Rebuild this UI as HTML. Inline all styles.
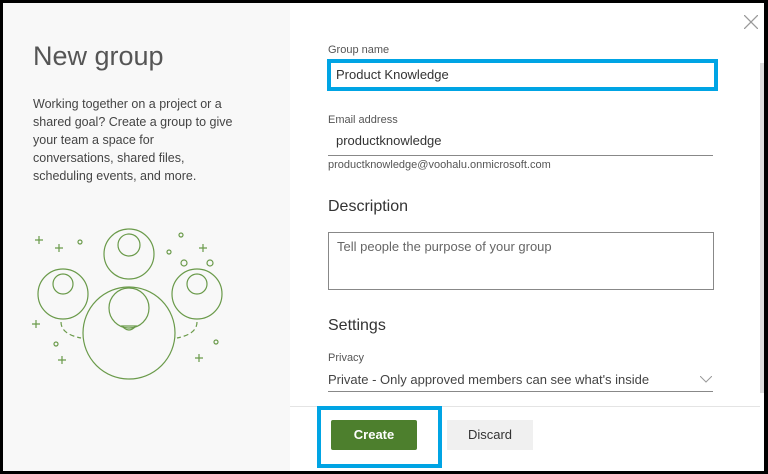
<!DOCTYPE html>
<html><head><style>
*{margin:0;padding:0;box-sizing:border-box}
body{width:768px;height:474px;background:#000;font-family:"Liberation Sans",sans-serif;position:relative;overflow:hidden}
.f{position:absolute;left:3px;top:3px;width:761px;height:468px;background:#fff}
.l{position:absolute;left:0;top:0;width:287px;height:468px;background:#f8f8f8}
.t{position:absolute;font-size:12px;color:#555}
</style></head><body><div class="f">
<div class="l">
<div style="position:absolute;left:30px;top:38px;font-size:27px;color:#555;font-weight:300">New group</div>
<div style="position:absolute;left:30px;top:92px;width:250px;font-size:12.5px;line-height:18px;color:#444;white-space:nowrap">Working together on a project or a<br>shared goal? Create a group to give<br>your team a space for<br>conversations, shared files,<br>scheduling events, and more.</div>
<svg style="position:absolute;left:-3px;top:197px" width="290" height="200" fill="none" stroke="#6a9a4a" stroke-width="1.2">
<circle cx="129" cy="54" r="25"/><circle cx="63" cy="94" r="25"/><circle cx="197" cy="94" r="25"/><circle cx="129" cy="133" r="46"/>
<path d="M61 122q0 12 20 16M197 122q0 12 -20 16" stroke-dasharray="5 3"/>
<circle cx="129" cy="108" r="20"/><path d="M122 126q7 8 14 0z"/>
<circle cx="129" cy="45" r="11"/><circle cx="63" cy="84" r="10"/><circle cx="197" cy="84" r="10"/>
<circle cx="184" cy="63" r="3"/><circle cx="210" cy="63" r="3"/>
<circle cx="80" cy="42" r="2"/><circle cx="169" cy="52" r="2"/><circle cx="181" cy="35" r="2"/><circle cx="56" cy="144" r="2"/><circle cx="216" cy="142" r="2"/>
<path d="M35 40h8M39 36v8M55 48h8M59 44v8M32 124h8M36 120v8M58 160h8M62 156v8M199 48h8M203 44v8M195 158h8M199 154v8"/>
</svg>
</div>
<svg style="position:absolute;left:741px;top:12px" width="14" height="14" stroke="#999" stroke-width="1.3"><path d="M0 0L14 14M14 0L0 14"/></svg>
<div style="position:absolute;left:757px;top:60px;width:4px;height:330px;background:#ddd"></div>
<div class="t" style="left:325px;top:41px;font-size:11px">Group name</div>
<div style="position:absolute;left:324px;top:56px;width:391px;height:32px;border:4px solid #00a4e4;font-size:13px;color:#333;padding:4px 5px">Product Knowledge</div>
<div class="t" style="left:325px;top:111px;font-size:11px">Email address</div>
<div style="position:absolute;left:333px;top:130px;font-size:13px;color:#333">productknowledge</div>
<div style="position:absolute;left:325px;top:152px;width:385px;height:1px;background:#888"></div>
<div class="t" style="left:325px;top:156px;font-size:11px">productknowledge@voohalu.onmicrosoft.com</div>
<div style="position:absolute;left:325px;top:195px;font-size:16px;color:#333">Description</div>
<div style="position:absolute;left:325px;top:229px;width:386px;height:58px;border:1px solid #888;font-size:13px;color:#666;padding:6px 8px">Tell people the purpose of your group</div>
<div style="position:absolute;left:325px;top:314px;font-size:16px;color:#333">Settings</div>
<div class="t" style="left:325px;top:349px;font-size:11px">Privacy</div>
<div style="position:absolute;left:325px;top:369px;font-size:13px;color:#444">Private - Only approved members can see what's inside</div>
<svg style="position:absolute;left:697px;top:373px" width="12" height="7" fill="none" stroke="#999"><path d="M0 0L6 6L12 0"/></svg>
<div style="position:absolute;left:325px;top:388px;width:385px;height:1px;background:#888"></div>
<div style="position:absolute;left:287px;top:403px;width:470px;height:1px;background:#e4e4e4"></div>
<div style="position:absolute;left:314px;top:403px;width:125px;height:62px;border:4px solid #00a4e4"></div>
<div style="position:absolute;left:328px;top:417px;width:86px;height:30px;background:#4d7f2d;border-radius:2px;color:#fff;font-size:13px;font-weight:bold;text-align:center;line-height:30px">Create</div>
<div style="position:absolute;left:444px;top:417px;width:86px;height:30px;background:#f0f0f0;color:#333;font-size:13px;text-align:center;line-height:30px">Discard</div>
</div></body></html>
